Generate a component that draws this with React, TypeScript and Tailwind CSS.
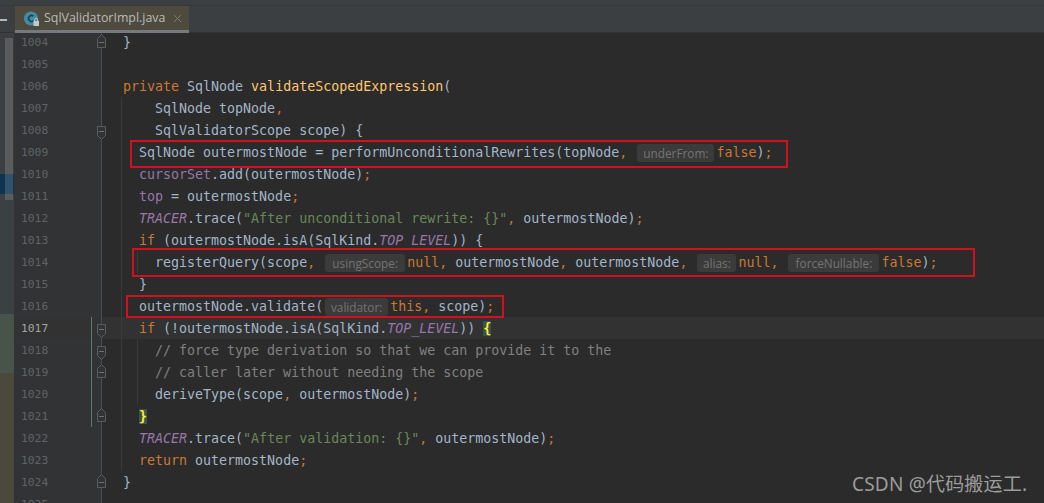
import type { ReactNode } from 'react'

const MONO = 'font-["DejaVu_Sans_Mono","Liberation_Mono",monospace]'

function K({ children }: { children: ReactNode }) {
    return <span className="text-[#cc7832]">{children}</span>
}

function F({ children }: { children: ReactNode }) {
    return <span className="text-[#9876aa]">{children}</span>
}

function S({ children }: { children: ReactNode }) {
    return <span className="italic text-[#9876aa]">{children}</span>
}

// parameter name hint, the width comes from the reference
function Hint({ label, className }: { label: string; className: string }) {
    return (
        <span
            className={`inline-block h-[18px] rounded-[3px] bg-[#3b3b3b] mx-[2px] text-center align-top mt-[2px] font-['Open_Sans',sans-serif] text-[11.8px] leading-[18px] text-[#747474] ${className}`}
        >
            {label}
        </span>
    )
}

function FoldMark({ up }: { up?: boolean }) {
    return (
        <svg
            width="11"
            height="14"
            viewBox="0 0 11 14"
            className={`absolute left-[82px] ${up ? 'top-[3px]' : 'top-[7px]'}`}
        >
            <path
                d={up ? 'M1.5 13.5V4.5L5.5 .5L9.5 4.5V13.5Z' : 'M1.5 .5V9.5L5.5 13.5L9.5 9.5V.5Z'}
                fill="#313335"
                stroke="#5a5d5f"
            />
            <path d={up ? 'M3 8.5H8' : 'M3 5.5H8'} stroke="#6e7072" />
        </svg>
    )
}

type Line = {
    no: number
    code?: ReactNode
    fold?: 'start' | 'end'
    guide?: boolean
    guide2?: boolean
    changed?: boolean
    current?: boolean
}

const lines: Line[] = [
    { no: 1004, code: <>{'}'}</>, fold: 'end' },
    { no: 1005 },
    { no: 1006, code: <><K>private</K> SqlNode <span className="text-[#ffc66d]">validateScopedExpression</span>(</> },
    { no: 1007, code: <>{'    '}SqlNode topNode<K>,</K></>, guide: true },
    { no: 1008, code: <>{'    '}SqlValidatorScope scope) {'{'}</>, fold: 'start', guide: true },
    {
        no: 1009,
        code: <>{'  '}SqlNode outermostNode = performUnconditionalRewrites(topNode<K>,</K> <Hint label="underFrom:" className="w-[77px]" /><K>false</K>)<K>;</K></>,
        guide: true,
    },
    { no: 1010, code: <>{'  '}<F>cursorSet</F>.add(outermostNode)<K>;</K></>, guide: true },
    { no: 1011, code: <>{'  '}<F>top</F> = outermostNode<K>;</K></>, guide: true },
    {
        no: 1012,
        code: <>{'  '}<S>TRACER</S>.trace(<span className="text-[#6a8759]">"After unconditional rewrite: {'{}'}"</span><K>,</K> outermostNode)<K>;</K></>,
        guide: true,
    },
    { no: 1013, code: <>{'  '}<K>if</K> (outermostNode.isA(SqlKind.<S>TOP_LEVEL</S>)) {'{'}</>, guide: true },
    {
        no: 1014,
        code: <>{'    '}registerQuery(scope<K>,</K> <Hint label="usingScope:" className="w-[80px]" /><K>null,</K> outermostNode<K>,</K> outermostNode<K>,</K> <Hint label="alias:" className="w-[39px]" /><K>null,</K> <Hint label="forceNullable:" className="w-[91px]" /><K>false</K>)<K>;</K></>,
        guide: true,
        guide2: true,
    },
    { no: 1015, code: <>{'  }'}</>, guide: true },
    {
        no: 1016,
        code: <>{'  '}outermostNode.validate(<Hint label="validator:" className="w-[63px]" /><K>this,</K> scope)<K>;</K></>,
        guide: true,
    },
    {
        no: 1017,
        code: <>{'  '}<K>if</K> (!outermostNode.isA(SqlKind.<S>TOP_LEVEL</S>)) <span className="bg-[#3b514d] font-bold text-[#ffef28]">{'{'}</span></>,
        fold: 'start',
        guide: true,
        changed: true,
        current: true,
    },
    {
        no: 1018,
        code: <>{'    '}<span className="text-[#808080]">// force type derivation so that we can provide it to the</span></>,
        fold: 'start',
        guide: true,
        guide2: true,
        changed: true,
    },
    {
        no: 1019,
        code: <>{'    '}<span className="text-[#808080]">// caller later without needing the scope</span></>,
        fold: 'end',
        guide: true,
        guide2: true,
        changed: true,
    },
    { no: 1020, code: <>{'    '}deriveType(scope<K>,</K> outermostNode)<K>;</K></>, guide: true, guide2: true, changed: true },
    {
        no: 1021,
        code: <>{'  '}<span className="bg-[#3b514d] font-bold text-[#ffef28]">{'}'}</span></>,
        fold: 'end',
        guide: true,
        changed: true,
    },
    {
        no: 1022,
        code: <>{'  '}<S>TRACER</S>.trace(<span className="text-[#6a8759]">"After validation: {'{}'}"</span><K>,</K> outermostNode)<K>;</K></>,
        guide: true,
    },
    { no: 1023, code: <>{'  '}<K>return</K> outermostNode<K>;</K></>, guide: true },
    { no: 1024, code: <>{'}'}</>, fold: 'end' },
    { no: 1025 },
]

function Row({ line }: { line: Line }) {
    return (
        <div className={`flex h-[22px] ${line.current ? 'bg-[#323232]' : ''}`}>
            {/* gutter */}
            <div className={`relative h-full w-[88px] shrink-0 ${line.current ? 'bg-[#323232]' : 'bg-[#313335]'}`}>
                <span
                    className={`absolute left-[7px] top-[1px] text-[11.3px] leading-[22px] ${line.current ? 'text-[#a4a3a3]' : 'text-[#606366]'}`}
                >
                    {line.no}
                </span>
                {line.changed && <div className="absolute left-[77px] top-0 h-full w-px bg-[#5a7a72]" />}
                <div className="absolute left-[87px] top-0 h-full w-px bg-[#4a4c4e]" />
                {line.fold && <FoldMark up={line.fold === 'end'} />}
            </div>
            {/* code */}
            <div className="relative h-full flex-1 whitespace-pre pl-[21px] text-[13.3px] leading-[22px] text-[#a3b5c9]">
                {line.guide && <div className="absolute left-[19px] top-0 h-full w-px bg-[#3a3a3a]" />}
                {line.guide2 && <div className="absolute left-[35px] top-0 h-full w-px bg-[#3a3a3a]" />}
                <span className="relative top-[1px]">{line.code}</span>
            </div>
        </div>
    )
}

export default function App() {
    return (
        <div className={`relative flex h-[503px] w-[1044px] flex-col overflow-hidden bg-[#2b2b2b] ${MONO}`}>
            {/* Tab bar */}
            <div className="h-[6px] shrink-0 border-b border-[#353739] bg-[#3c3f41]" />
            <div className="flex h-[27px] shrink-0 border-b border-[#323232] bg-[#3c3f41]">
                <div className="flex w-[15px] items-center">
                    <div className="mt-[1px] h-[2px] w-[7px] bg-[#b8b8b8]" />
                </div>
                <div className="relative z-10 -mb-px flex w-[174px] items-center border-b-[3px] border-[#747a80] bg-[#4e4a3e] pl-[9px] pt-[1px] font-['Open_Sans',sans-serif] text-[12.4px] text-[#bbbbbb]">
                    <svg width="16" height="16" viewBox="0 0 16 16" className="shrink-0">
                        <circle cx="7" cy="7.5" r="7" fill="#3d8fa8" />
                        <path d="M9.5 5.2A3 3 0 1 0 9.5 9.8" fill="none" stroke="#1f3f4d" strokeWidth="1.6" />
                        <rect x="9.5" y="10" width="5.5" height="5" fill="#c4c8ca" />
                        <path d="M10.7 10V8.8A1.5 1.5 0 0 1 13.8 8.8V10" fill="none" stroke="#c4c8ca" />
                    </svg>
                    <span className="ml-[4px]">SqlValidatorImpl.java</span>
                    <svg width="9" height="9" viewBox="0 0 9 9" className="ml-[8px]">
                        <path d="M1 1L8 8M8 1L1 8" stroke="#7d7b72" />
                    </svg>
                </div>
            </div>

            {/* Editor */}
            <div className="flex min-h-0 flex-1 overflow-hidden">
                {/* Error stripe and scrollbar of the side panel */}
                <div className="relative flex w-[14px] shrink-0 flex-col">
                    <div className="h-[137px] bg-[#3c3f41]" />
                    <div className="h-[4px] bg-[#3b4043]" />
                    <div className="h-[20px] bg-[#0d3550]" />
                    <div className="h-[120px] bg-[#3b4043]" />
                    <div className="h-[59px] bg-[#48544a]" />
                    <div className="flex-1 bg-[#4c483c]" />
                    <div className="absolute left-[5px] top-[5px] h-[162px] w-[8px] bg-white/15" />
                </div>
                <div className="min-w-0 flex-1">
                    <div className="-mt-[2px]">
                        {lines.map((line) => (
                            <Row key={line.no} line={line} />
                        ))}
                    </div>
                </div>
            </div>

            {/* Red annotation boxes */}
            <div className="absolute left-[130px] top-[140px] h-[28px] w-[658px] border-2 border-[#d0121f]" />
            <div className="absolute left-[132px] top-[248px] h-[29px] w-[843px] border-2 border-[#d0121f]" />
            <div className="absolute left-[126px] top-[295px] h-[23px] w-[378px] border-2 border-[#d0121f]" />

            {/* Watermark */}
            <div className="absolute left-[852px] top-[471px] whitespace-nowrap font-['Noto_Sans','Noto_Sans_CJK_SC',sans-serif] text-[19px] leading-[26px] tracking-[0.2px] text-[#9c9c9c]">
                CSDN @代码搬运工.
            </div>
        </div>
    )
}
